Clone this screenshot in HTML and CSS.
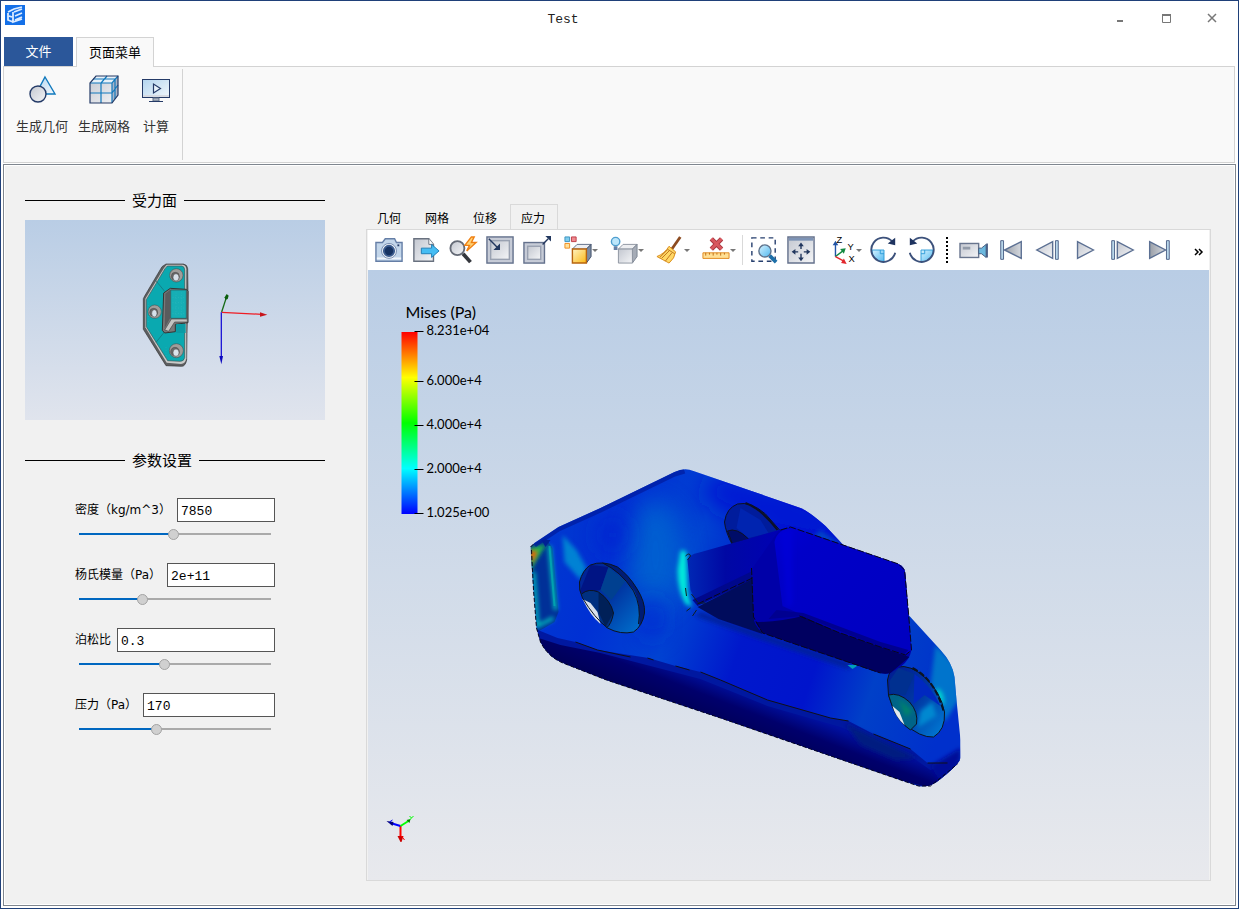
FILE: index.html
```html
<!DOCTYPE html>
<html lang="zh-CN">
<head>
  <meta charset="UTF-8" />
  <meta name="viewport" content="width=device-width, initial-scale=1.0" />
  <title>Test</title>
  <link rel="stylesheet" href="styles.css">
</head>
<body>
  <!-- shared gradients for all icons -->
  <svg class="defs" width="0" height="0" aria-hidden="true">
    <defs>
      <linearGradient id="gray" x1="0" y1="0" x2="1" y2="1"><stop offset="0" stop-color="#c3c7d0"/><stop offset="1" stop-color="#f4f5f7"/></linearGradient>
      <linearGradient id="sky" x1="0" y1="0" x2="1" y2="1"><stop offset="0" stop-color="#b3d5ef"/><stop offset="1" stop-color="#f2f8fc"/></linearGradient>
      <linearGradient id="blue" x1="0" y1="0" x2="1" y2="1"><stop offset="0" stop-color="#d8f3ff"/><stop offset="1" stop-color="#4eb8ef"/></linearGradient>
      <linearGradient id="gold" x1="0" y1="0" x2="1" y2="1"><stop offset="0" stop-color="#fff3c4"/><stop offset="1" stop-color="#fcb913"/></linearGradient>
      <linearGradient id="steel" x1="0" y1="0" x2="1" y2="0"><stop offset="0" stop-color="#9a9fa8"/><stop offset="1" stop-color="#d5d9df"/></linearGradient>
    </defs>
  </svg>

  <div class="window">
    <header class="titlebar">
      <svg class="logo" viewBox="0 0 20 20">
        <rect width="20" height="20" fill="#1470e8"/>
        <path d="M3 7l6-3 8-2M3 8v7l5 2M4 11l3 1M9 7l8-3M10 11l7-3M10 15l7-3M8 7v10l9-3" fill="none" stroke="#dcebff" stroke-width="1.8"/>
      </svg>
      <h1>Test</h1>
      <button class="win-btn" aria-label="最小化"><svg viewBox="0 0 12 12"><path d="M3 9h6" stroke="#777" stroke-width="2"/></svg></button>
      <button class="win-btn" aria-label="最大化"><svg viewBox="0 0 12 12"><path d="M2.500 2.500h8v8h-8zM2 2.500h9" fill="none" stroke="#777"/><path d="M2 3h9" stroke="#777" stroke-width="2"/></svg></button>
      <button class="win-btn" aria-label="关闭"><svg viewBox="0 0 12 12"><path d="M2 2l8 8M10 2l-8 8" stroke="#777" stroke-width="1.500"/></svg></button>
    </header>

    <nav class="menu">
      <button class="menu-file">文件</button>
      <button class="menu-page">页面菜单</button>
    </nav>

    <div class="ribbon">
      <div class="ribbon-group">
        <button class="ribbon-btn">
          <svg viewBox="0 0 32 32">
            <path d="M19 4l10 17H10z" fill="url(#sky)" stroke="#1179bd" stroke-width="1.400"/>
            <circle cx="12" cy="21" r="8" fill="url(#gray)" stroke="#243a67" stroke-width="1.400"/>
          </svg>
          <span>生成几何</span>
        </button>
        <button class="ribbon-btn">
          <svg viewBox="0 0 32 32">
            <path d="M2 10l6-7h22l-6 7v20H2z" fill="url(#gray)"/>
            <path d="M2 10l6-7h22l-6 7z" fill="#e8f1f8"/>
            <path d="M24 10l6-7v19l-6 8z" fill="#aab5c8"/>
            <path d="M2 20h22l6-8M13 30V10l6-7M5 6h22v20M24 10v20M2 10h22l6-7" fill="none" stroke="#1179bd" stroke-width="1.200"/>
            <path d="M2 10v20h22l6-8V3H8z" fill="none" stroke="#243a67" stroke-width="1.200"/>
          </svg>
          <span>生成网格</span>
        </button>
        <button class="ribbon-btn">
          <svg viewBox="0 0 32 32">
            <rect x="2.500" y="6.500" width="27" height="18" fill="url(#sky)" stroke="#243a67"/>
            <path d="M3 22h26v2H3z" fill="#d7dbe2"/>
            <path d="M13 25h6v3h-6z" fill="#aeb6c2" stroke="#617087"/>
            <path d="M9 28.500h14" stroke="#243a67"/>
            <path d="M13.500 11v9l7-4.500z" fill="#e8f3fb" stroke="#243a67" stroke-width="1.200"/>
          </svg>
          <span>计算</span>
        </button>
      </div>
    </div>

    <main class="workspace">
      <aside class="sidebar">
        <h2 class="section-title">受力面</h2>
        <svg class="face-view" viewBox="0 0 900 600" role="img" aria-label="受力面">
          <g transform="translate(285 90)">
            <path d="M138 42L190 42Q202 44 203 56L204 125L201 250L200 330Q196 349 185 349L138 347L70 238V146L74 138L126 50Z" fill="#5d5e60" stroke="#333" stroke-width="2"/>
            <path d="M140 44L188 44Q199 46 199 58V325Q196 342 183 342L140 338L76 232V146L132 54Z" fill="#c9cac8"/>
            <path d="M142 48L186 48Q194 50 194 60V323Q192 334 180 334L143 332L79 230V149L135 56Z" fill="#0aa9b0" stroke="#3c5355" stroke-width="2"/>
            <path d="M106 90l28 34M108 277l26-32" stroke="#176b72" stroke-width="2"/>
            <path d="M131 129l20-14 48 3 5 6v94l-38 5v22l-32 4-7-8z" fill="#797979" stroke="#343434" stroke-width="3"/>
            <path d="M136 131l15-12v84l-17 32z" fill="#595b5d"/>
            <path d="M152 120h47v85h-47z" fill="#16aeb5" stroke="#2b5558" stroke-width="2"/>
            <path d="M134 240l20-33h48v9h-38l-18 28z" fill="#c4c4c2" stroke="#454545" stroke-width="2"/>
            <path d="M169 222h28v27h-28z" fill="#0b9ba4"/>
            <path d="M158 142h35M158 158h35M158 174h35M158 190h35M168 128v72M184 128v72M138 292v35M85 158v60" stroke="#55c9cb" stroke-dasharray="2 6"/>
            <g stroke="#444" stroke-width="1.500">
              <circle cx="169" cy="76" r="20" fill="#9f9d9a"/><circle cx="166" cy="79" r="12" fill="#696969"/><ellipse cx="168" cy="82" rx="9" ry="11" fill="#d7e1ea"/>
              <circle cx="104" cy="185" r="20" fill="#9f9d9a"/><circle cx="101" cy="187" r="12" fill="#696969"/><ellipse cx="103" cy="190" rx="8" ry="11" fill="#d7e1ea"/>
              <circle cx="169" cy="302" r="21" fill="#9f9d9a"/><circle cx="165" cy="305" r="13" fill="#696969"/><ellipse cx="168" cy="308" rx="9" ry="11" fill="#dae3eb"/>
            </g>
            <path d="M305 186l13-40" stroke="#176b16" stroke-width="4"/><path d="M314 142l6-10 6 5-3 10-7 2z" fill="#0b5e0c"/>
            <path d="M305 187l120 6" stroke="#ef1c24" stroke-width="4"/><path d="M420 187l22 7-22 6z" fill="#c8141a"/>
            <path d="M304 187v135" stroke="#2019d6" stroke-width="4"/><path d="M298 318h11l-5 25z" fill="#0b08be"/>
          </g>
        </svg>

        <h2 class="section-title section-params">参数设置</h2>
        <form class="params">
          <div class="param">
            <div class="param-row"><label for="density">密度（kg/m^3）</label><input type="text" id="density" value="7850"></div>
            <input type="range" aria-label="密度" value="49" style="--fill: 49%">
          </div>
          <div class="param">
            <div class="param-row"><label for="young">杨氏模量（Pa）</label><input type="text" id="young" value="2e+11"></div>
            <input type="range" aria-label="杨氏模量" value="32" style="--fill: 32%">
          </div>
          <div class="param">
            <div class="param-row"><label for="poisson">泊松比</label><input type="text" id="poisson" value="0.3"></div>
            <input type="range" aria-label="泊松比" value="44" style="--fill: 44%">
          </div>
          <div class="param">
            <div class="param-row"><label for="pressure">压力（Pa）</label><input type="text" id="pressure" value="170"></div>
            <input type="range" aria-label="压力" value="40" style="--fill: 40%">
          </div>
        </form>
      </aside>

      <section class="result">
        <div class="tabs" role="tablist">
          <button class="tab" role="tab">几何</button>
          <button class="tab" role="tab">网格</button>
          <button class="tab" role="tab">位移</button>
          <button class="tab active" role="tab" aria-selected="true">应力</button>
        </div>
        <div class="panel">
          <div class="toolbar">
            <button class="tool" aria-label="截图"><svg viewBox="0 0 30 30">
              <path d="M1 7h7l3-4h10l2 4h6v20H1z" fill="#c3d6ea" stroke="#657ea6" stroke-width="1.500"/><path d="M2 24h26" stroke="#f1f6fb" stroke-width="2"/>
              <circle cx="15" cy="16" r="8" fill="#f2f6fa" stroke="#7289ac"/><circle cx="15" cy="16" r="5.500" fill="#173361" stroke="#3b5b8d" stroke-width="2"/><path d="M24 10h2" stroke="#243a67" stroke-width="2"/>
            </svg></button>
            <button class="tool" aria-label="导出"><svg viewBox="0 0 30 30">
              <path d="M2 3h16l5 6v18H2z" fill="url(#gray)" stroke="#69717f" stroke-width="1.500"/><path d="M18 3v6h5" fill="#fff" stroke="#69717f"/>
              <path d="M10 13h11V9l8 7-8 7v-4H10z" fill="#46bdf3" stroke="#1d7cb4"/>
            </svg></button>
            <button class="tool" aria-label="快速缩放"><svg viewBox="0 0 30 30">
              <path d="M15 19l8 9" stroke="#34373d" stroke-width="4"/><circle cx="9" cy="13" r="7.500" fill="url(#gray)" stroke="#646a76" stroke-width="2"/>
              <path d="M24 1l-7 9h5l-3 6 10-9h-5l3-6z" fill="#ffd477" stroke="#f08013" stroke-width="1.500"/>
            </svg></button>
            <button class="tool" aria-label="缩小窗口"><svg viewBox="0 0 30 30">
              <rect x="1" y="1" width="28" height="28" fill="#c7ccd7" stroke="#64718c" stroke-width="1.500"/><rect x="5" y="5" width="20" height="20" fill="url(#gray)" stroke="#99a1b1" stroke-width="1.500"/>
              <path d="M3 3l9 9" stroke="#22375e" stroke-width="1.500"/><path d="M15 8v7H8z" fill="#22375e"/>
            </svg></button>
            <button class="tool" aria-label="放大窗口"><svg viewBox="0 0 30 30">
              <rect x="1" y="7" width="22" height="22" fill="#c7ccd7" stroke="#64718c" stroke-width="1.500"/><rect x="5" y="11" width="14" height="14" fill="url(#gray)" stroke="#99a1b1" stroke-width="1.500"/>
              <path d="M21 9l6-6" stroke="#22375e" stroke-width="1.500"/><path d="M24 0h6v6z" fill="#22375e"/>
            </svg></button>
            <button class="tool split" aria-label="着色"><svg viewBox="0 0 30 30">
              <path d="M1 1h5v5H1z" fill="#7fcdee" stroke="#3a91bd"/><path d="M8 1h5v5H8z" fill="#ee8a90" stroke="#bd3a45"/><path d="M1 8h5v5H1z" fill="#ffe29d" stroke="#f08a1d"/>
              <path d="M9 14l5-5h15l-5 5z" fill="#eceef2" stroke="#5a6a85"/><path d="M24 14l5-5v13l-5 7z" fill="#7d8ba2" stroke="#3d4c68"/><path d="M9 14h15v15H9z" fill="url(#gold)" stroke="#b8640f" stroke-width="1.500"/>
            </svg><i class="caret"></i></button>
            <button class="tool split" aria-label="光照"><svg viewBox="0 0 30 30">
              <path d="M9 14l5-5h15l-5 5z" fill="#edeef1" stroke="#8b929e"/><path d="M24 14l5-5v13l-5 7z" fill="#a5abb6" stroke="#7b8391"/><path d="M9 14h15v15H9z" fill="url(#gray)" stroke="#8b929e"/>
              <circle cx="6" cy="6" r="4.500" fill="#bce6fb" stroke="#4e9ecf" stroke-width="1.500"/><path d="M4 11h4v4H4z" fill="#667fa5"/>
            </svg><i class="caret"></i></button>
            <button class="tool split" aria-label="清除"><svg viewBox="0 0 30 30">
              <path d="M26 1l-9 13" stroke="#8c4b20" stroke-width="3"/><path d="M14 11l7 6q-1 7-7 12L1 22q8-3 13-11z" fill="#ffd866" stroke="#d98a17"/>
              <path d="M12 14l8 5M14 16L6 24M17 18l-7 9M12 15l-8 8" stroke="#bc711a" fill="none"/>
            </svg><i class="caret"></i></button>
            <button class="tool split" aria-label="删除测量"><svg viewBox="0 0 30 30">
              <path d="M10 3l11 11M21 3L10 14" stroke="#a93640" stroke-width="5"/><path d="M10 3l11 11M21 3L10 14" stroke="#d8575e" stroke-width="3"/>
              <path d="M1 18h28v6H1z" fill="#ffdf94" stroke="#e18619"/><path d="M4 18v3M8 18v2M12 18v3M16 18v2M20 18v3M24 18v2" stroke="#c06d10"/>
            </svg><i class="caret"></i></button>
            <span class="divider"></span>
            <button class="tool" aria-label="框选缩放"><svg viewBox="0 0 30 30">
              <rect x="2" y="2" width="25" height="25" fill="none" stroke="#263f6e" stroke-width="1.500" stroke-dasharray="5 4"/>
              <path d="M21 21l7 7" stroke="#1d6fa8" stroke-width="4"/><circle cx="16" cy="16" r="6.500" fill="url(#blue)" stroke="#60738c" stroke-width="1.500"/>
            </svg></button>
            <button class="tool" aria-label="适应窗口"><svg viewBox="0 0 30 30">
              <path d="M1 1h28v28H1z" fill="url(#gray)" stroke="#64718c" stroke-width="1.500"/><path d="M2 2h26v3H2z" fill="#7d93b5"/>
              <path d="M15 9v5M15 19v5M7 17h5M18 17h5" stroke="#22375e" stroke-width="1.500"/><path d="M15 7l3 4h-6zM15 27l3-4h-6zM5 17l4-3v6zM25 17l-4-3v6z" fill="#22375e"/>
            </svg></button>
            <button class="tool split" aria-label="视图方向"><svg viewBox="0 0 30 30">
              <path d="M8 22V8" stroke="#2154a7" stroke-width="1.500"/><path d="M5 10l3-5 3 5z" fill="#2154a7"/>
              <path d="M8 22l8-6" stroke="#138a42" stroke-width="1.500"/><path d="M13 14l6-1-2 6z" fill="#138a42"/>
              <path d="M8 22l9 5" stroke="#e2262c" stroke-width="1.500"/><path d="M17 24l3 6-6-1z" fill="#e2262c"/>
              <text x="9" y="7" class="axis">Z</text><text x="21" y="15" class="axis">Y</text><text x="22" y="28" class="axis">X</text>
            </svg><i class="caret"></i></button>
            <button class="tool" aria-label="顺时针旋转"><svg viewBox="0 0 30 30">
              <path d="M15 15v13A13 13 0 0 1 2 15z" fill="url(#blue)" stroke="#2c9bd7"/><path d="M11 15v4h4" fill="none" stroke="#2c9bd7"/>
              <path d="M24 6A13 13 0 1 0 27 18" fill="none" stroke="#3c517b" stroke-width="2"/><path d="M27 2v8l-8-2z" fill="#1e335f"/>
            </svg></button>
            <button class="tool" aria-label="逆时针旋转"><svg viewBox="0 0 30 30">
              <path d="M15 15v13a13 13 0 0 0 13-13z" fill="url(#blue)" stroke="#2c9bd7"/><path d="M19 15v4h-4" fill="none" stroke="#2c9bd7"/>
              <path d="M6 6a13 13 0 1 1-3 12" fill="none" stroke="#3c517b" stroke-width="2"/><path d="M3 2v8l8-2z" fill="#1e335f"/>
            </svg></button>
            <span class="grip"></span>
            <button class="tool" aria-label="录制"><svg viewBox="0 0 30 30">
              <rect x="0" y="8" width="20" height="15" fill="url(#gray)" stroke="#68758e" stroke-width="1.500"/><path d="M3 13h8" stroke="#929ba9" stroke-width="3"/>
              <path d="M20 13h3l5-4v14l-5-4h-3z" fill="#6cb9df" stroke="#44597d"/><path d="M29 8v15" stroke="#273f6d" stroke-width="1.500"/>
            </svg></button>
            <button class="tool" aria-label="第一帧"><svg viewBox="0 0 30 30"><path d="M26 6v18L8 15z" fill="url(#steel)" stroke="#5c7093" stroke-width="1.500"/><path d="M4 5h3v20H4z" fill="#b9d7ea" stroke="#4a5f85"/></svg></button>
            <button class="tool" aria-label="上一帧"><svg viewBox="0 0 30 30"><path d="M20 6v18L3 15z" fill="url(#gray)" stroke="#5c7093" stroke-width="1.500"/><path d="M23 5h3v20h-3z" fill="#b9d7ea" stroke="#4a5f85"/></svg></button>
            <button class="tool" aria-label="播放"><svg viewBox="0 0 30 30"><path d="M7 6v18l17-9z" fill="url(#gray)" stroke="#5c7093" stroke-width="1.500"/></svg></button>
            <button class="tool" aria-label="下一帧"><svg viewBox="0 0 30 30"><path d="M10 6v18l17-9z" fill="url(#gray)" stroke="#5c7093" stroke-width="1.500"/><path d="M4 5h3v20H4z" fill="#b9d7ea" stroke="#4a5f85"/></svg></button>
            <button class="tool" aria-label="最后一帧"><svg viewBox="0 0 30 30"><path d="M5 6v18l17-9z" fill="url(#steel)" stroke="#5c7093" stroke-width="1.500"/><path d="M23 5h3v20h-3z" fill="#b9d7ea" stroke="#4a5f85"/></svg></button>
            <button class="more" aria-label="更多"><svg viewBox="0 0 10 8"><path d="M1 1l3 3-3 3M5 1l3 3-3 3" fill="none" stroke="#000" stroke-width="1.500"/></svg></button>
          </div>

          <svg class="viewport" viewBox="368 270 840 610" preserveAspectRatio="xMidYMid meet">
            <defs>
              <linearGradient id="scale" x1="0" y1="0" x2="0" y2="1">
                <stop offset="0" stop-color="#f00"/><stop offset="0.250" stop-color="#ff0"/><stop offset="0.500" stop-color="#0f0"/><stop offset="0.750" stop-color="#0ff"/><stop offset="1" stop-color="#00f"/>
              </linearGradient>
              <linearGradient id="plate" gradientUnits="userSpaceOnUse" x1="540" y1="560" x2="950" y2="700">
                <stop offset="0" stop-color="#0038d0"/><stop offset="0.150" stop-color="#0030d4"/><stop offset="0.330" stop-color="#0044d2"/><stop offset="0.500" stop-color="#0018cc"/><stop offset="0.680" stop-color="#0014cc"/><stop offset="0.820" stop-color="#0040c8"/><stop offset="1" stop-color="#0030cc"/>
              </linearGradient>
              <linearGradient id="side" gradientUnits="userSpaceOnUse" x1="745" y1="692" x2="731" y2="728">
                <stop offset="0" stop-color="#0010a0"/><stop offset="0.450" stop-color="#00006c"/><stop offset="1" stop-color="#000058"/>
              </linearGradient>
              <linearGradient id="neck" x1="0" y1="0" x2="1" y2="0"><stop offset="0" stop-color="#0028b4"/><stop offset="0.400" stop-color="#0008a4"/><stop offset="1" stop-color="#0000b4"/></linearGradient>
              <linearGradient id="front" x1="0" y1="0" x2="1" y2="1"><stop offset="0" stop-color="#0000d4"/><stop offset="0.200" stop-color="#0000c8"/><stop offset="1" stop-color="#0000c0"/></linearGradient>
              <linearGradient id="cone" x1="0" y1="0" x2="1" y2="1"><stop offset="0" stop-color="#001a90"/><stop offset="0.500" stop-color="#0038a4"/><stop offset="1" stop-color="#0080d8"/></linearGradient>
              <filter id="b3" x="-1" y="-1" width="3" height="3"><feGaussianBlur stdDeviation="2"/></filter>
              <filter id="b10" x="-1" y="-1" width="3" height="3"><feGaussianBlur stdDeviation="12"/></filter>
              <clipPath id="body"><path d="M530 547L534 543L558 527L600 508L674 472Q684 467 693 471L748 490L800 508Q808 511 825 526L840 542L909 616L940 650Q952 663 954 677L956 700L960 740V758Q959 764 940 779Q930 788 918 786L900 780L720 718L606 680L565 664Q548 658 540 642L536 628L533 590L531 565Z"/></clipPath>
              <clipPath id="hole1"><path d="M579 582Q582 570 590 565Q602 560 617 567Q628 575 636 588Q645 602 644 613Q642 626 633 632Q620 635 607 628Q594 618 582 598Q578 590 579 582Z"/></clipPath>
            </defs>

            <!-- colour scale -->
            <text x="405" y="318" class="scale-title">Mises (Pa)</text>
            <rect x="401" y="332" width="16" height="182" fill="url(#scale)"/>
            <path d="M414 331.500h9M414 381.500h9M414 425.500h9M414 469.500h9M414 513.500h9" stroke="#000"/>
            <g class="scale-label">
              <text x="426" y="335">8.231e+04</text>
              <text x="426" y="385">6.000e+4</text>
              <text x="426" y="429">4.000e+4</text>
              <text x="426" y="473">2.000e+4</text>
              <text x="426" y="517">1.025e+00</text>
            </g>

            <!-- plate -->
            <g clip-path="url(#body)">
              <path d="M525 460h440v330H525z" fill="url(#plate)"/>
              <path d="M715 470L850 520L845 545L770 530L700 500Z" fill="#0018d4" filter="url(#b10)"/>
              <ellipse cx="655" cy="555" rx="28" ry="55" fill="#0068d0" filter="url(#b10)" opacity=".8"/>
              <ellipse cx="612" cy="535" rx="14" ry="20" fill="#0024d0" filter="url(#b10)" opacity=".7"/>
              <ellipse cx="652" cy="618" rx="10" ry="22" fill="#0020d4" filter="url(#b10)" opacity=".8"/>
              <path d="M820 530L845 548L835 552L812 538Z" fill="#0044c8" filter="url(#b3)"/>
              <path d="M562 535L576 550L586 568L580 580L564 562Z" fill="#00a4d4" filter="url(#b3)" opacity=".7"/>
              <path d="M530 546L545 538L552 548L558 612L554 622L537 632Z" fill="#003098"/>
              <path d="M549 546L555 610M533 572L537 626L553 618" fill="none" stroke="#00b0b8" stroke-width="4" filter="url(#b3)"/>
              <path d="M549 546L554 606" fill="none" stroke="#00b0b0" stroke-width="2" opacity=".7"/>
              <path d="M529 548L546 544L534 563L530 574Z" fill="#20b84c" filter="url(#b3)"/>
              <path d="M529 551L537 551L532 564Z" fill="#ff5a00" filter="url(#b3)"/>
              <path d="M541 540L545 547L550 540Z" fill="#002094"/>
              <path d="M680 551Q687 548 686 558L687 585Q687 598 692 607L685 604Q677 590 677 570Z" fill="#00e8dc" filter="url(#b3)"/>
              <path d="M935 645L956 666L958 700L944 722Q937 700 930 684Z" fill="#0090cc" filter="url(#b3)" opacity=".7"/>
              <path d="M936 688Q944 690 944 706L935 696Z" fill="#00d0d0" filter="url(#b3)"/>
              <path d="M530 627L557 638L575 642L597 650L648 658L675 666L700 672L720 680L767 700L830 718L848 721L873 734L910 749L927 763H960V790H530Z" fill="#0018a0" />
              <path d="M535 637L560 645L600 653L650 666L700 679L767 706L840 727L873 741L910 756L930 770L965 758L960 795L530 690Z" fill="url(#side)"/>
              <path d="M845 724L880 740L916 758L895 760L860 745Z" fill="#001c80" filter="url(#b3)"/>
              <path d="M930 766L960 748V760L940 782Z" fill="#000a98" filter="url(#b3)"/>
              <path d="M534 545L558 529L600 510L674 474L684 471" fill="none" stroke="#001b9c" stroke-width="5" opacity=".7"/>
              <path d="M700 612L762 634L850 663L848 669L756 638L695 616Z" fill="#00249c" filter="url(#b3)"/>
              <path d="M847 665h11l-6 4z" fill="#00a0b8"/>
            </g>
            <path d="M530 547L534 543M531 550L533 590L536 628L540 642Q548 658 565 664L606 680L720 718L900 780L918 786H930L957 764" fill="none" stroke="#080820" stroke-width="1" stroke-dasharray="4 2"/>
            <path d="M575 642L597 650L630 657M647 658l6 2M675 666l14 4M700 672L720 680L767 700L830 718L848 721M873 734L910 749M927 763h20" fill="none" stroke="#101018"/>

            <!-- left hole -->
            <g clip-path="url(#hole1)">
              <path d="M575 558h75v80H575z" fill="url(#cone)"/>
              <path d="M579 592L590 565L608 567L600 590L582 594Z" fill="#001484"/>
              <path d="M608 567L625 581L611 600L600 590Z" fill="#004090"/>
              <path d="M602 563Q618 570 634 591Q641 605 638 632L648 615L641 590L615 562Z" fill="#001c74"/>
              <path d="M581 594Q588 588 598 592Q610 600 613 613Q611 624 606 628L595 620Z" fill="#003080"/>
              <path d="M598 592Q610 600 613 613L605 627L598 612Z" fill="#002058"/>
            </g>
            <path d="M582 599L590 603L597 612L600 624Q590 616 582 599Z" fill="#dae1ec"/>
            <path d="M579 582Q582 570 590 565Q602 560 617 567Q628 575 636 588Q645 602 644 613Q642 626 633 632Q620 635 607 628Q594 618 582 598Q578 590 579 582ZM602 563Q620 571 633 591Q641 606 638 624M581 594Q588 588 598 592Q610 600 613 613Q611 624 606 628" fill="none" stroke="#0c1420"/>

            <!-- top hole -->
            <path d="M724 522Q726 508 737 504Q750 501 765 514L780 531L732 545Q725 532 724 522Z" fill="#001c9c" stroke="#0c1024"/>
            <path d="M740 508L760 520L768 533L748 538L736 528Z" fill="#0024b0"/>
            <path d="M727 531Q736 527 748 539L732 544Z" fill="#000c68" stroke="#0c1024"/>
            <path d="M745 503Q760 508 777 530" fill="none" stroke="#0c1024" stroke-width="2"/>

            <!-- right hole -->
            <path d="M887 680Q889 668 897 667Q910 664 925 678Q940 692 944 712Q945 730 933 737Q920 738 903 723Q893 712 888 695Z" fill="url(#cone)" stroke="#0c1420"/>
            <path d="M889 681L898 668L914 674L905 695L890 693Z" fill="#003090"/>
            <path d="M914 674Q930 685 940 706L924 695L913 704Z" fill="#0028c0"/>
            <path d="M920 711L932 702L936 716L917 728Z" fill="#0088d0" filter="url(#b3)"/>
            <path d="M888 695Q898 692 909 702Q918 712 916 724L910 730Q898 722 892 707Z" fill="#006488" stroke="#0c1420"/>
            <path d="M898 699L912 711L905 717Z" fill="#00846c" filter="url(#b3)"/>
            <path d="M892 706L899 712L904 725Q895 717 892 706Z" fill="#e4e9ef"/>
            <path d="M912 668Q934 679 943 711" fill="none" stroke="#0c1420" stroke-width="2" stroke-dasharray="6 2"/>

            <!-- block -->
            <path d="M687 560Q690 554 697 553L782 529L770 560L752 578L697 604L690 590Z" fill="url(#neck)"/>
            <path d="M692 600L752 571L752 580L697 606Z" fill="#00088c"/>
            <path d="M697 607L752 579L754 618L762 634L718 619Z" fill="#000c5c"/>
            <path d="M752 568L778 531Q786 526 794 528L898 564Q905 567 905 575L908 613L911 650Q909 660 901 666L890 673Q884 675 876 672L762 633Q753 625 753 617Z" fill="#0000a8"/>
            <path d="M774 542Q777 528 794 528L898 564Q905 567 905 575L911 650L905 654L802 615L782 606Z" fill="url(#front)"/>
            <path d="M780 532L792 529V604L786 607Z" fill="#0000dc" filter="url(#b3)" opacity=".6"/>
            <path d="M755 622Q780 622 802 616L837 632L880 647L903 655L909 657L890 673Q884 675 876 672L762 633Z" fill="#000060"/>
            <path d="M776 610L803 613L880 642L908 650L903 655L880 647L802 616L768 619Z" fill="#000090"/>
            <path d="M780 530L790 527L898 564L904 570L908 613L911 650L905 655M751 568L753 617L762 633L880 673M799 616L837 632L880 647L905 655M697 604L752 578" fill="none" stroke="#08081c" stroke-dasharray="7 2"/>
            <path d="M685 556q4-4 5 0l-3 4M685 588l1 8M691 594l6 8M697 603h8M686 611l4-3M692 616l4-6" fill="none" stroke="#102020"/>

            <!-- orientation axes -->
            <path d="M400 826v12" stroke="#f00" stroke-width="2"/><path d="M397 836h6l-2 6h-1z" fill="#c00"/><path d="M401 836l3 4" stroke="#f00"/>
            <path d="M400 826l-10-3" stroke="#00f" stroke-width="2"/><path d="M386 821l7 1-1 4z" fill="#00007c"/><path d="M389 822l3-2" stroke="#00f"/>
            <path d="M400 826l8-5" stroke="#0f0" stroke-width="2"/><path d="M406 820l4-1-1 4z" fill="#080"/><path d="M409 820l4-4M409 816l2 2" stroke="#0f0"/>
          </svg>
        </div>
      </section>
    </main>
  </div>
</body>
</html>
```
FILE: styles.css
```css
* {
  box-sizing: border-box;
}

body {
  margin: 0;
  font-family: "DejaVu Sans", "Noto Sans CJK SC", sans-serif;
  font-size: 12px;
  color: #000;
}

button {
  padding: 0;
  border: none;
  background: none;
  font-family: "Noto Sans CJK SC", sans-serif;
  color: inherit;
}

.defs {
  position: absolute;
}

.window {
  display: flex;
  flex-direction: column;
  height: 100vh;
  border: 1px solid #1f4079;
  background: #fff;
}

/* title bar */
.titlebar {
  display: flex;
  height: 36px;
  padding: 0 3px 0 4px;
}

.logo {
  width: 20px;
  height: 20px;
  margin: 4px 4px 0 0;
}

.titlebar h1 {
  flex: 1;
  margin: 0;
  font-family: "Liberation Mono", monospace;
  font-size: 13px;
  font-weight: normal;
  line-height: 38px;
  text-align: center;
  color: #222;
}

.win-btn {
  width: 46px;
  height: 34px;
}

.win-btn svg {
  display: block;
  width: 12px;
  height: 12px;
  margin: 0 auto;
}

/* menu and ribbon */
.menu {
  display: flex;
  gap: 3px;
  padding-left: 3px;
}

.menu button {
  height: 29px;
  padding-bottom: 2px;
  font-size: 13px;
}

.menu .menu-file {
  width: 69px;
  background: #2b579a;
  color: #fff;
}

.menu .menu-page {
  width: 78px;
  height: 30px;
  margin-bottom: -1px;
  border: 1px solid #d3d3d3;
  border-bottom: none;
  background: #f9f9f9;
  z-index: 1;
}

.ribbon {
  display: flex;
  height: 97px;
  margin: 0 3px 1px 2px;
  padding: 2px 0;
  border: 1px solid #d3d3d3;
  background: #f9f9f9;
}

.ribbon-group {
  display: flex;
  padding: 0 5px 0 7px;
  border-right: 1px solid #d3d3d3;
}

.ribbon-btn {
  display: flex;
  flex-direction: column;
  align-items: center;
  padding: 4px 5px;
  font-size: 13px;
  color: #333;
}

.ribbon-btn svg {
  width: 32px;
  height: 32px;
  margin-bottom: 11px;
}

.ribbon-btn span {
  line-height: 20px;
}

/* workspace */
.workspace {
  flex: 1;
  display: flex;
  min-height: 0;
  margin: 0 2px 2px;
  padding: 21px 24px 24px 20px;
  border: 1px solid #7f868f;
  outline: 1px solid #fff;
  outline-offset: -2px;
  background: #f1f1f1;
}

.sidebar {
  width: 300px;
  margin: 0 41px 0 1px;
}

.section-title {
  display: flex;
  align-items: center;
  gap: 7px;
  margin: 0 0 6px;
  font-family: "Noto Sans CJK SC", sans-serif;
  font-size: 15px;
  font-weight: normal;
  line-height: 28px;
}

.section-title::before,
.section-title::after {
  content: "";
  width: 100px;
  height: 1px;
  background: #000;
}

.section-title::after {
  flex: 1;
}

.face-view {
  display: block;
  width: 100%;
  height: 200px;
  background: linear-gradient(#b9cde5, #e0e4ed);
}

.section-params {
  margin: 26px 0 24px;
}

.params {
  width: 200px;
  margin: 0 auto;
}

.param {
  margin-bottom: 22px;
}

.param-row {
  display: flex;
  gap: 6px;
  height: 24px;
  line-height: 24px;
}

.param-row label {
  white-space: nowrap;
}

.param-row input {
  flex: 1;
  min-width: 0;
  padding: 2px 3px 0;
  border: 1px solid #555;
  background: #fff;
  font-family: "Liberation Mono", monospace;
  font-size: 13px;
}

input[type="range"] {
  appearance: none;
  display: block;
  width: 192px;
  height: 14px;
  margin: 5px auto 0;
  background: linear-gradient(to right, #0067c0 var(--fill), #aaa var(--fill)) center / 100% 2px no-repeat;
}

input[type="range"]::-webkit-slider-thumb {
  appearance: none;
  width: 11px;
  height: 11px;
  border: 1px solid #a3a3a3;
  border-radius: 50%;
  background: #d0d0d0;
}

/* result view */
.result {
  flex: 1;
  display: flex;
  flex-direction: column;
  min-width: 0;
  padding-top: 18px;
}

.tabs {
  display: flex;
}

.tab {
  width: 48px;
  height: 25px;
  padding-right: 2px;
  border: 1px solid transparent;
  border-bottom: none;
  font-size: 12px;
}

.tab.active {
  border-color: #d9d9d9;
}

.panel {
  flex: 1;
  display: flex;
  flex-direction: column;
  min-height: 0;
  padding: 0 1px;
  border: 1px solid #d9d9d9;
}

.toolbar {
  display: flex;
  align-items: center;
  height: 40px;
  padding-left: 2px;
  background: #fff;
}

.tool {
  display: flex;
  align-items: center;
  justify-content: center;
  width: 37px;
  height: 36px;
}

.tool svg {
  width: 28px;
  height: 28px;
  overflow: visible;
}

.tool.split {
  width: 46px;
  padding-left: 9px;
  justify-content: flex-start;
}

.caret {
  border: 3px solid transparent;
  border-top-color: #777;
  border-bottom: none;
}

.axis {
  font-family: "Liberation Sans", sans-serif;
  font-size: 10px;
}

.divider {
  width: 1px;
  height: 30px;
  margin: 0 2px 0 3px;
  background: #d9d9d9;
}

.grip {
  height: 26px;
  margin: 0 7px;
  border-left: 2px dotted #000;
}

.more {
  width: 20px;
  height: 36px;
  margin-left: auto;
}

.more svg {
  width: 10px;
  height: 8px;
}

.viewport {
  flex: 1;
  display: block;
  width: 100%;
  min-height: 0;
  background: linear-gradient(#b9cde5, #e8e9ed);
}

.scale-title,
.scale-label {
  font-family: Lato, sans-serif;
  font-size: 16px;
}

.scale-label {
  font-size: 13px;
}
```
